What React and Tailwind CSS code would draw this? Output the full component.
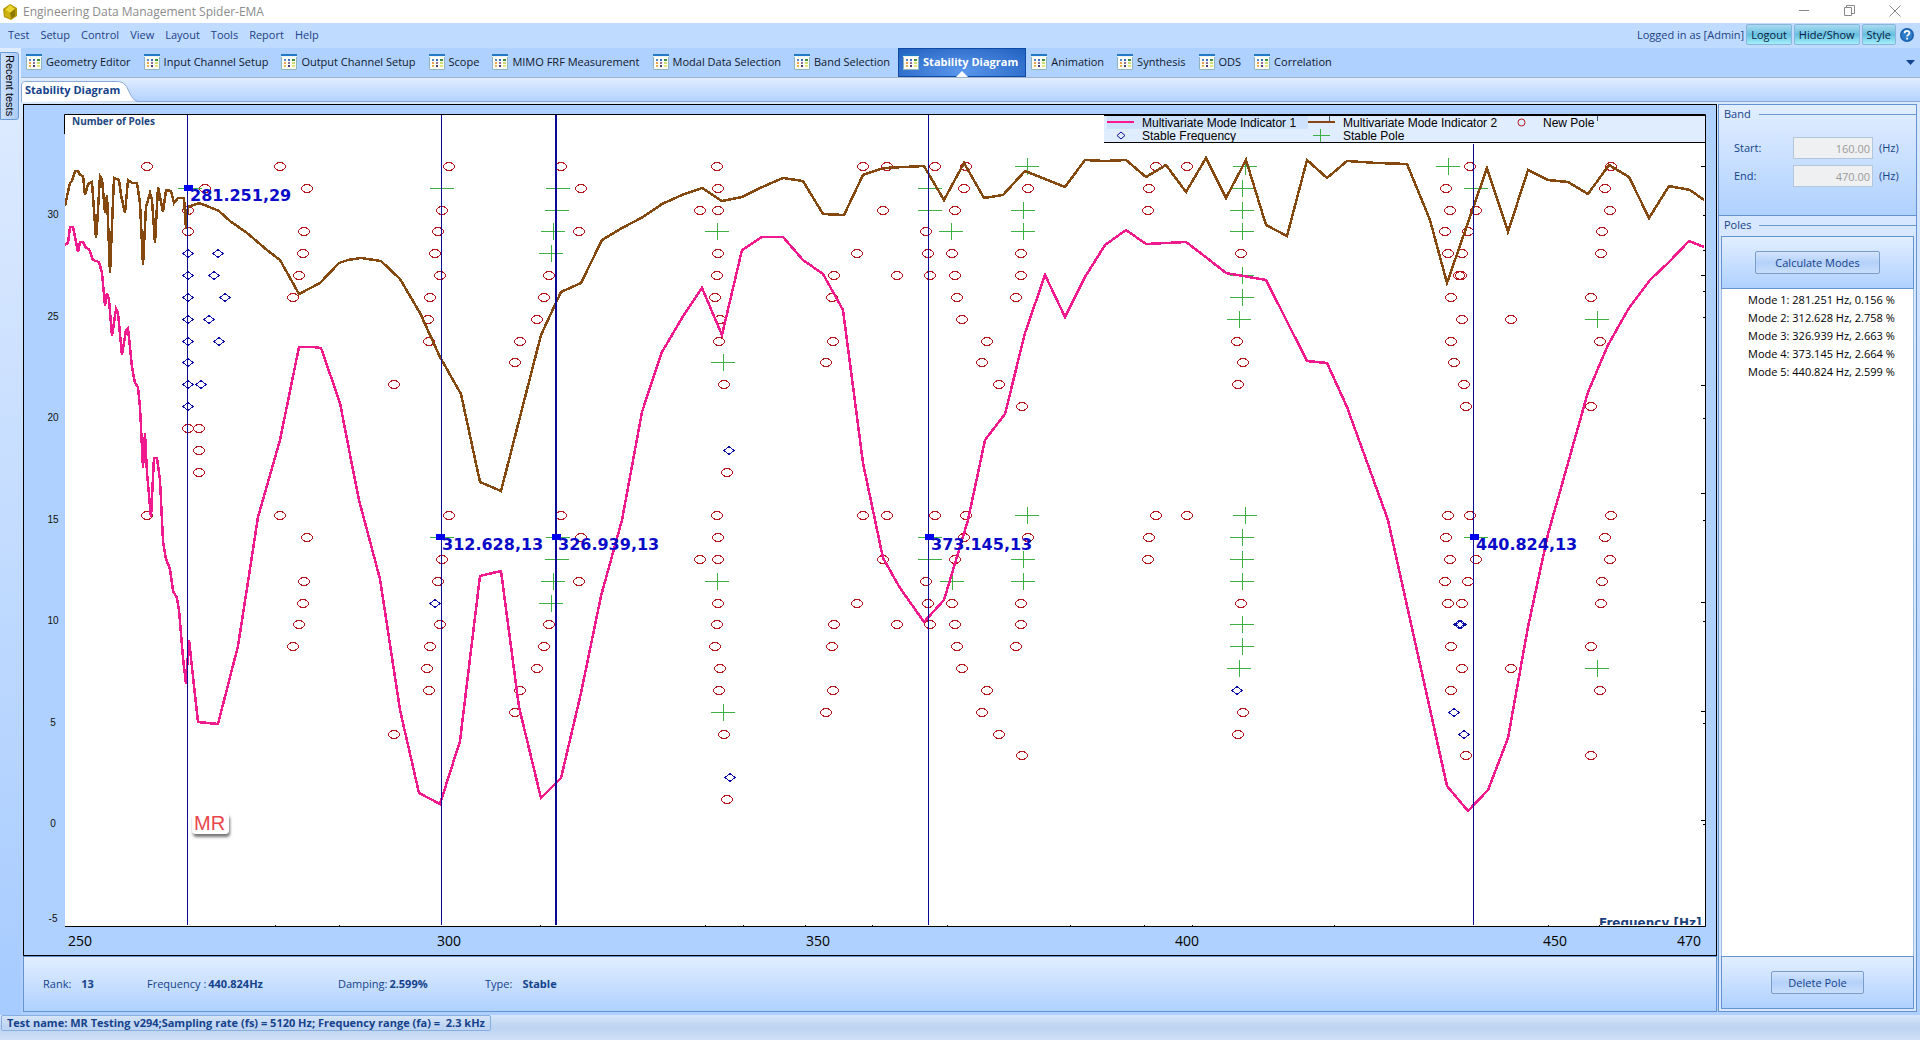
import clsx from 'clsx';

const MENU = ['Test', 'Setup', 'Control', 'View', 'Layout', 'Tools', 'Report', 'Help'];

const VIEWS = [
  'Geometry Editor',
  'Input Channel Setup',
  'Output Channel Setup',
  'Scope',
  'MIMO FRF Measurement',
  'Modal Data Selection',
  'Band Selection',
  'Stability Diagram',
  'Animation',
  'Synthesis',
  'ODS',
  'Correlation',
];

const MODES = [
  { freq: '281.251', damping: '0.156' },
  { freq: '312.628', damping: '2.758' },
  { freq: '326.939', damping: '2.663' },
  { freq: '373.145', damping: '2.664' },
  { freq: '440.824', damping: '2.599' },
];

const INFO = [
  { label: 'Rank:', value: '13', cls: 'w-[104px] gap-[10px]' },
  { label: 'Frequency :', value: '440.824Hz', cls: 'w-[191px] gap-[2px]' },
  { label: 'Damping:', value: '2.599%', cls: 'w-[147px] gap-[2px]' },
  { label: 'Type:', value: 'Stable', cls: 'gap-[10px]' },
];

// one entry per model order, top row first
// o = new pole, d = stable frequency, p = stable pole, h = stable pole lying on a cursor
const ROWS = [
  { o: [147, 280, 449, 561, 717, 863, 887, 935, 966, 1156, 1187, 1470, 1611], p: [1027, 1245, 1448] },
  { o: [205, 307, 581, 718, 964, 1028, 1149, 1446, 1605], p: [1242], h: [190, 442, 558, 930, 1476] },
  { o: [188, 442, 700, 718, 883, 955, 1148, 1450, 1476, 1610], p: [1023, 1242], h: [557, 930] },
  { o: [188, 304, 438, 579, 926, 1445, 1468, 1602], p: [553, 717, 951, 1023, 1242] },
  { o: [303, 435, 718, 857, 928, 952, 1021, 1241, 1448, 1462, 1601], d: [188, 218], p: [551] },
  { o: [299, 440, 549, 717, 834, 897, 930, 955, 1021, 1459, 1461], d: [188, 214], p: [1242] },
  { o: [293, 430, 544, 715, 832, 957, 1016, 1451, 1591], d: [188, 225], p: [1242] },
  { o: [428, 537, 720, 962, 1462, 1511], d: [188, 209], p: [1239, 1597] },
  { o: [429, 520, 719, 833, 987, 1237, 1451, 1600], d: [188, 219] },
  { o: [515, 826, 982, 1243, 1454], d: [188], p: [723] },
  { o: [394, 724, 999, 1238, 1464], d: [188, 201] },
  { o: [1022, 1466, 1591], d: [188] },
  { o: [188, 199] },
  { o: [199], d: [729] },
  { o: [199, 727] },
  {},
  { o: [147, 280, 449, 561, 717, 863, 887, 935, 966, 1156, 1187, 1448, 1470, 1611], p: [1027, 1245] },
  { o: [307, 581, 718, 964, 1028, 1149, 1446, 1605], p: [1242], h: [442, 558, 930, 1476] },
  { o: [442, 700, 718, 883, 955, 1148, 1450, 1476, 1610], p: [1023, 1242], h: [557, 930] },
  { o: [304, 438, 579, 926, 1445, 1468, 1602], p: [553, 717, 952, 1023, 1242] },
  { o: [303, 718, 857, 928, 952, 1021, 1241, 1448, 1462, 1601], d: [435], p: [551] },
  { o: [299, 440, 549, 717, 834, 897, 930, 955, 1021], d: [1459, 1461], p: [1242] },
  { o: [293, 430, 544, 715, 832, 957, 1016, 1451, 1591], p: [1242] },
  { o: [427, 537, 720, 962, 1462, 1511], p: [1239, 1597] },
  { o: [429, 520, 719, 833, 987, 1451, 1600], d: [1237] },
  { o: [515, 826, 982, 1243], d: [1454], p: [723] },
  { o: [394, 724, 999, 1238], d: [1464] },
  { o: [1022, 1466, 1591] },
  { d: [730] },
  { o: [727] },
];

const rowY = (i) => Math.round(166 + i * 21.83);

const MMI_1 =
  '65,245 68,243 70,227 73,227 78,252 80,242 83,242 86,248 89,249 93,260 99,262 102,273 105,306 107,293 109,300 112,336 116,309 118,313 122,355 126,330 128,328 132,367 135,383 138,387 140,407 143,468 145,433 147,473 151,517 154,458 157,458 160,480 163,541 166,559 170,569 173,591 177,598 179,610 183,658 186,684 189,640 198,722 218,724 238,646 250,569 258,517 280,440 299,347 313,347 321,348 340,403 353,470 359,500 380,579 400,710 419,793 440,804 460,741 480,576 501,571 519,707 541,798 561,778 581,693 601,596 622,520 642,412 662,352 682,318 702,288 722,335 742,250 762,237 783,237 803,260 823,274 843,310 863,463 883,558 900,588 924,622 944,600 968,520 985,440 1005,414 1025,333 1045,275 1065,317 1085,277 1105,245 1126,230 1146,244 1186,242 1207,258 1226,273 1266,280 1307,361 1327,363 1347,407 1388,520 1447,786 1468,811 1488,790 1508,738 1528,627 1548,534 1588,392 1608,345 1629,308 1650,280 1669,262 1689,241 1704,247';

const MMI_2 =
  '65,206 69,187 70,183 72,181 75,171 78,171 80,175 83,176 85,195 88,184 92,182 96,238 97,227 100,176 102,179 105,213 107,195 110,273 114,178 119,180 121,195 125,213 128,180 132,183 137,183 140,203 143,265 146,207 150,193 152,200 155,243 158,187 163,212 166,190 171,191 174,203 178,198 184,198 186,229 188,207 199,203 207,206 219,211 230,221 247,233 267,250 280,260 299,294 320,283 339,263 348,260 361,258 381,261 400,279 420,313 440,357 461,394 480,482 501,491 541,335 561,292 581,283 602,240 622,228 643,217 662,204 682,195 702,188 722,201 742,197 760,188 783,178 803,181 823,214 844,215 863,175 884,168 924,166 944,200 964,163 984,198 1003,195 1025,171 1065,187 1085,160 1105,161 1126,160 1146,177 1166,165 1186,192 1206,158 1226,198 1246,160 1266,225 1287,236 1307,160 1327,178 1347,161 1377,163 1407,164 1430,220 1447,283 1487,168 1508,232 1528,170 1548,180 1568,182 1588,194 1609,165 1629,177 1649,218 1669,186 1690,190 1704,200';

const CURSORS = [
  { x: 187, w: 1, top: 115, my: 188, mx: 188, text: '281.251,29' },
  { x: 441, w: 1, top: 115, my: 537, mx: 440, text: '312.628,13' },
  { x: 555, w: 2, top: 115, my: 537, mx: 556, text: '326.939,13' },
  { x: 928, w: 1, top: 115, my: 537, mx: 929, text: '373.145,13' },
  { x: 1473, w: 1, top: 144, my: 537, mx: 1474, text: '440.824,13' },
];

const Y_LABELS = [[30, 218], [25, 320], [20, 421], [15, 523], [10, 624], [5, 726], [0, 827], [-5, 922]];
const X_LABELS = [[250, 68], [300, 437], [350, 806], [400, 1175], [450, 1543], [470, 1677]];
const BIG_TICKS = [166, 275, 385, 493, 602, 711, 820];
const SMALL_TICKS = [215, 250, 291, 317, 418, 520, 621, 723, 824];
const X_TICKS = [275, 339, 540, 705, 743, 805, 872, 947, 1070, 1144, 1192, 1334, 1548, 1599];

function NewPole({ x, y }) {
  return <ellipse cx={x} cy={y + 0.5} rx="5.500" ry="4" fill="none" stroke="#b5171f" />;
}

function StableFreq({ x, y }) {
  return <path d={`M${x - 5} ${y + 0.5}l5 -4l5 4l-5 4z`} fill="none" stroke="#0d0da8" />;
}

function StablePole({ x, y, flat }) {
  return (
    <g stroke="#3cb043">
      <path d={`M${x - 12} ${y + 0.5}h24`} />
      {!flat && <path d={`M${x + 0.5} ${y - 8}v17`} />}
    </g>
  );
}

function ViewIcon() {
  return (
    <svg width="16" height="16" viewBox="0 0 16 16" className="shrink-0">
      <rect width="16" height="16" fill="#eaf4f2" />
      <path d="M.5 3v12.5h15V3" fill="#fbfcf3" stroke="#8fb3bf" />
      <rect width="16" height="2" fill="#2478c8" />
      <rect x="3" y="5" width="2" height="2" fill="#5d87c4" />
      <rect x="7" y="5" width="2" height="2" fill="#3f6ab8" />
      <rect x="11" y="5" width="3" height="2" fill="#3c8e42" />
      <rect x="3" y="8" width="2" height="2" fill="#f0a04c" />
      <rect x="7" y="8" width="2" height="2" fill="#8f6f9c" />
      <rect x="11" y="8" width="3" height="2" fill="#c9dd70" />
      <rect x="3" y="11" width="2" height="2" fill="#ecb04c" />
      <rect x="7" y="11" width="2" height="2" fill="#4a3a78" />
      <rect x="11" y="11" width="3" height="2" fill="#e6e27c" />
    </svg>
  );
}

function TitleBar() {
  return (
    <header className="flex h-[23px] shrink-0 items-center bg-white pl-[3px]">
      <svg width="15" height="16" viewBox="0 0 15 16">
        <path d="M7 0l7 4v8l-6 4l-7-3l-1-8z" fill="#b59a00" />
        <path d="M7 1l5 4l-5 4l-5-3z" fill="#ecd530" />
        <path d="M7 9l5-4v7l-4 3z" fill="#8f7800" />
        <path d="M2 6l5 3l1 6l-6-3z" fill="#cdb112" />
      </svg>
      <h1 className="ml-[5px] text-[12px] text-[#8c8c8c]">Engineering Data Management Spider-EMA</h1>
      <div className="ml-auto flex gap-[34px] pr-[19px] pb-[2px] text-[#8a8a8a]">
        <button aria-label="Minimize">
          <svg width="11" height="11" viewBox="0 0 11 11"><path d="M0 5.5h10" stroke="currentColor" /></svg>
        </button>
        <button aria-label="Restore">
          <svg width="11" height="11" viewBox="0 0 11 11" fill="none" stroke="currentColor">
            <path d="M.5 2.5h7v8h-7zM2.500 2.500v-2h8v8h-3" />
          </svg>
        </button>
        <button aria-label="Close">
          <svg width="12" height="12" viewBox="0 0 12 12"><path d="M.5 .5l11 11M11.500 .5l-11 11" stroke="currentColor" /></svg>
        </button>
      </div>
    </header>
  );
}

function MenuBar() {
  return (
    <nav className="flex h-[25px] shrink-0 items-center bg-[#bfdbff] pb-[2px] pl-2">
      <div className="flex gap-[11px]">
        {MENU.map((m) => (
          <button key={m} className="text-[#1d4289]">{m}</button>
        ))}
      </div>
      <div className="ml-auto flex items-center gap-[2px] pr-[6px]">
        <span className="text-[#1d4289]">Logged in as [Admin]</span>
        {['Logout', 'Hide/Show', 'Style'].map((b) => (
          <button
            key={b}
            className="h-[21px] rounded-[2px] border border-[#8ab4dc] bg-linear-to-b from-[#a9dcf0] via-[#66bfe0] to-[#a4f0fa] px-1 text-[#0b1c40]"
          >
            {b}
          </button>
        ))}
        <button aria-label="Help" className="ml-[2px]">
          <svg width="14" height="14" viewBox="0 0 14 14">
            <circle cx="7" cy="7" r="7" fill="#1a5fae" />
            <circle cx="7" cy="7" r="5.500" fill="#2b7cc9" />
            <path d="M4.600 5.300c0-3.200 4.900-3 4.900-.3c0 1.700-2.400 1.700-2.400 3.500" fill="none" stroke="#fff" strokeWidth="1.700" />
            <rect x="6.200" y="9.700" width="1.800" height="1.800" fill="#fff" />
          </svg>
        </button>
      </div>
    </nav>
  );
}

function ViewBar() {
  return (
    <nav className="flex h-[30px] shrink-0 items-start border-b border-[#9fb4cc] bg-[#afd1ff]">
      {VIEWS.map((v) => {
        const active = v === 'Stability Diagram';
        return (
          <button
            key={v}
            className={clsx(
              'relative flex h-[29px] items-center gap-1 pr-2 pb-[2px] pl-[5px]',
              active
                ? 'bg-radial-[at_50%_80%] from-[#5a97ec] to-[#1f5fbe] font-bold text-white outline -outline-offset-1 outline-[#0f4aa5]'
                : 'text-[#10182c]'
            )}
          >
            <ViewIcon />
            {v}
            {active && (
              <svg width="12" height="6" viewBox="0 0 12 6" className="absolute bottom-0 left-1/2 -translate-x-1/2">
                <path d="M6 0l6 6H0z" fill="#fff" />
              </svg>
            )}
          </button>
        );
      })}
      <button aria-label="More views" className="mr-[5px] ml-auto self-center">
        <svg width="9" height="5" viewBox="0 0 9 5"><path d="M0 0h9L4.500 5z" fill="#12438f" /></svg>
      </button>
    </nav>
  );
}

function StabilityChart() {
  return (
    <svg viewBox="23 104 1694 852" className="min-h-0 w-full flex-1">
      <defs>
        <clipPath id="plot"><rect x="65" y="115" width="1640" height="810" /></clipPath>
        <filter id="noteShadow" x="-20%" y="-20%" width="150%" height="170%">
          <feDropShadow dx="1" dy="3" stdDeviation="1.500" floodColor="#555" floodOpacity=".8" />
        </filter>
      </defs>
      <rect x="23.500" y="104.500" width="1693" height="851" fill="#afd1ff" stroke="#000" />
      <rect x="65" y="115" width="1640" height="811" fill="#fff" />
      <path d="M64.500 134v-19.500H1705.500V926.500H65" fill="none" stroke="#000" />

      <g stroke="#000">
        {BIG_TICKS.map((y) => <path key={y} d={`M1701 ${y + 0.5}h4`} />)}
        {SMALL_TICKS.map((y) => <path key={y} d={`M1703 ${y + 0.5}h2`} />)}
        {X_TICKS.map((x) => <path key={x} d={`M${x + 0.5} 925v1`} />)}
      </g>

      <g fontFamily="Liberation Sans, Arial, sans-serif" fontSize="10" textAnchor="middle" fill="#111">
        {Y_LABELS.map(([v, y]) => <text key={v} x="53" y={y}>{v}</text>)}
      </g>
      <g fontFamily="Open Sans, sans-serif" fontSize="14" fontWeight="500" fill="#000">
        {X_LABELS.map(([v, x]) => <text key={v} x={x} y="946">{v}</text>)}
      </g>

      <g clipPath="url(#plot)">
        <g shapeRendering="crispEdges">
          {ROWS.map((row, i) => (
            <g key={i}>
              {row.o?.map((x) => <NewPole key={x} x={x} y={rowY(i)} />)}
              {row.d?.map((x) => <StableFreq key={x} x={x} y={rowY(i)} />)}
              {row.p?.map((x) => <StablePole key={x} x={x} y={rowY(i)} />)}
              {row.h?.map((x) => <StablePole key={x} x={x} y={rowY(i)} flat />)}
            </g>
          ))}
          <polyline points={MMI_1} fill="none" stroke="#ee1a8e" strokeWidth="2.500" />
          <polyline points={MMI_2} fill="none" stroke="#85480f" strokeWidth="2.500" />
        </g>
        <text x="1599" y="927" fontFamily="DejaVu Sans, sans-serif" fontSize="12" fontWeight="700" fill="#1c3f7c">Frequency [Hz]</text>
      </g>

      {CURSORS.map((c) => (
        <g key={c.text}>
          <rect x={c.x} y={c.top} width={c.w} height={925 - c.top} fill="#0a0a96" />
          <rect x={c.mx - 4} y={c.my - 3} width="9" height="6" fill="#0000f0" />
          <text x={c.mx + 2} y={c.my + 13} fontFamily="DejaVu Sans, sans-serif" fontSize="16" fontWeight="700" fill="#0a0ac8">{c.text}</text>
        </g>
      ))}

      <text x="72" y="125" fontFamily="Open Sans, sans-serif" fontSize="10" fontWeight="700" fill="#24487f">Number of Poles</text>

      <rect x="1104" y="115" width="601" height="28" fill="#e0edfe" />
      <rect x="1107" y="116" width="201" height="13" fill="#cfe2fd" />
      <path d="M1104 115h601" stroke="#000" strokeWidth="2" />
      <path d="M1104 142.500h601" stroke="#000" />
      <path d="M1329.500 116v6M1597.500 116v5" stroke="#456" />
      <path d="M1107 122h27" stroke="#ff1493" strokeWidth="2" />
      <path d="M1308 122h27" stroke="#8b4513" strokeWidth="2" />
      <ellipse cx="1521.500" cy="122.500" rx="3.500" ry="3.500" fill="none" stroke="#b5171f" />
      <path d="M1117 135.500l4 -3.500l4 3.500l-4 3.500z" fill="none" stroke="#0d0da8" />
      <path d="M1313 135.500h17M1320.500 129v13" stroke="#3cb043" />
      <g fontFamily="Liberation Sans, Arial, sans-serif" fontSize="12" fill="#000">
        <text x="1142" y="127">Multivariate Mode Indicator 1</text>
        <text x="1343" y="127">Multivariate Mode Indicator 2</text>
        <text x="1543" y="127">New Pole</text>
        <text x="1142" y="140">Stable Frequency</text>
        <text x="1343" y="140">Stable Pole</text>
      </g>

      <rect x="192" y="813" width="37" height="21" rx="4" fill="#fff" filter="url(#noteShadow)" />
      <text x="194" y="830" fontFamily="Liberation Sans, Arial, sans-serif" fontSize="20" fill="#e8474b">MR</text>
    </svg>
  );
}

function GroupTitle({ children }) {
  return (
    <div className="flex h-5 items-center gap-2 pb-[2px] pl-[5px]">
      <h2>{children}</h2>
      <div className="h-px flex-1 bg-[#6e98d0]" />
    </div>
  );
}

function BandInput({ id, label, value }) {
  return (
    <div className="flex h-[22px] items-center">
      <label htmlFor={id} className="w-[59px]">{label}</label>
      <input
        id={id}
        defaultValue={value}
        disabled
        className="h-[22px] w-20 border border-[#b4c6dc] bg-[#eef0f2] pr-[2px] text-right text-[#9b9b9b]"
      />
      <span className="ml-[6px]">(Hz)</span>
    </div>
  );
}

function PushButton({ className, children }) {
  return (
    <button
      className={clsx(
        'h-[23px] rounded-[2px] border border-[#7c9cc9] bg-linear-to-b from-[#d3e4fb] via-[#b4d1fa] to-[#c8defb]',
        className
      )}
    >
      {children}
    </button>
  );
}

function SidePanel() {
  return (
    <aside className="mt-[2px] flex w-[199px] shrink-0 flex-col border border-[#6593cf] bg-[#d6e7ff]">
      <section className="h-[111px] border-b border-[#6593cf] bg-linear-to-b from-[#e2eeff] to-[#afd1ff]">
        <GroupTitle>Band</GroupTitle>
        <div className="flex flex-col gap-[6px] pt-3 pl-[15px]">
          <BandInput id="band-start" label="Start:" value="160.00" />
          <BandInput id="band-end" label="End:" value="470.00" />
        </div>
      </section>
      <section className="flex min-h-0 flex-1 flex-col">
        <GroupTitle>Poles</GroupTitle>
        <div className="mx-[2px] flex h-[53px] shrink-0 items-center justify-center border border-[#6593cf] bg-linear-to-b from-[#e2eeff] to-[#afd1ff]">
          <PushButton className="w-[125px]">Calculate Modes</PushButton>
        </div>
        <ul className="mx-[2px] min-h-0 flex-1 border-x border-[#9dbbe3] bg-white pt-[2px] pl-[26px] text-black">
          {MODES.map((m, i) => (
            <li key={m.freq} className="h-[18px] leading-[18px] whitespace-nowrap">
              Mode {i + 1}: {m.freq} Hz, {m.damping} %
            </li>
          ))}
        </ul>
        <div className="mx-[2px] mb-[2px] flex h-[53px] shrink-0 items-center justify-center border border-[#6593cf] bg-linear-to-b from-[#e2eeff] to-[#afd1ff]">
          <PushButton className="w-[93px]">Delete Pole</PushButton>
        </div>
      </section>
    </aside>
  );
}

export default function App() {
  return (
    <div className="flex h-screen flex-col overflow-hidden bg-[#afd1ff] font-['Open_Sans',sans-serif] text-[11px] leading-4 text-[#15428b]">
      <TitleBar />
      <MenuBar />
      <div className="flex min-h-0 flex-1">
        <div className="w-[21px] shrink-0 bg-linear-to-b from-[#e0ecff] to-[#a6cbff] pt-1">
          <button className="h-[68px] w-[19px] rounded-r-[3px] border border-[#6a9bd8] bg-linear-to-r from-[#d0e2fc] to-[#abcbf7] font-['Liberation_Sans',sans-serif] text-[11px] text-black [writing-mode:vertical-rl]">
            Recent tests
          </button>
        </div>
        <div className="flex min-w-0 flex-1 flex-col">
          <ViewBar />
          <div className="flex h-6 shrink-0 items-end border-b border-[#8da9dc] bg-linear-to-b from-[#e0edff] to-[#b4d2ff]">
            <button className="relative flex h-5 w-[117px] items-center pb-[2px] pl-1 font-bold">
              <svg width="117" height="21" viewBox="0 0 117 21" className="absolute top-0 left-0">
                <path d="M.5 21V5q0-4.500 4-4.500h93q5 0 8 5l5 10q3 5 7 5" fill="#fff" stroke="#8da9dc" />
              </svg>
              <span className="relative">Stability Diagram</span>
            </button>
          </div>
          <div className="flex min-h-0 flex-1 gap-px bg-linear-to-b from-[#d9e8fd] to-[#afcfff] pr-[3px] pb-[3px]">
            <div className="flex min-w-0 flex-1 flex-col pt-[2px] pl-[2px]">
              <StabilityChart />
              <footer className="flex h-[56px] shrink-0 items-center border border-[#6593cf] bg-linear-to-b from-[#e2eeff] to-[#afd1ff] pl-[19px]">
                {INFO.map((f) => (
                  <div key={f.label} className={clsx('flex', f.cls)}>
                    <span>{f.label}</span>
                    <b>{f.value}</b>
                  </div>
                ))}
              </footer>
            </div>
            <SidePanel />
          </div>
        </div>
      </div>
      <footer className="h-[25px] shrink-0 bg-linear-to-b from-[#d7e6f9] via-[#bcd3f2] to-[#cfe0f6] px-px">
        <div className="inline-block h-4 rounded-[2px] border border-[#86aede] px-[5px] leading-[14px] font-bold whitespace-pre">
          Test name: MR Testing v294;Sampling rate (fs) = 5120 Hz; Frequency range (fa) =  2.3 kHz
        </div>
      </footer>
    </div>
  );
}
